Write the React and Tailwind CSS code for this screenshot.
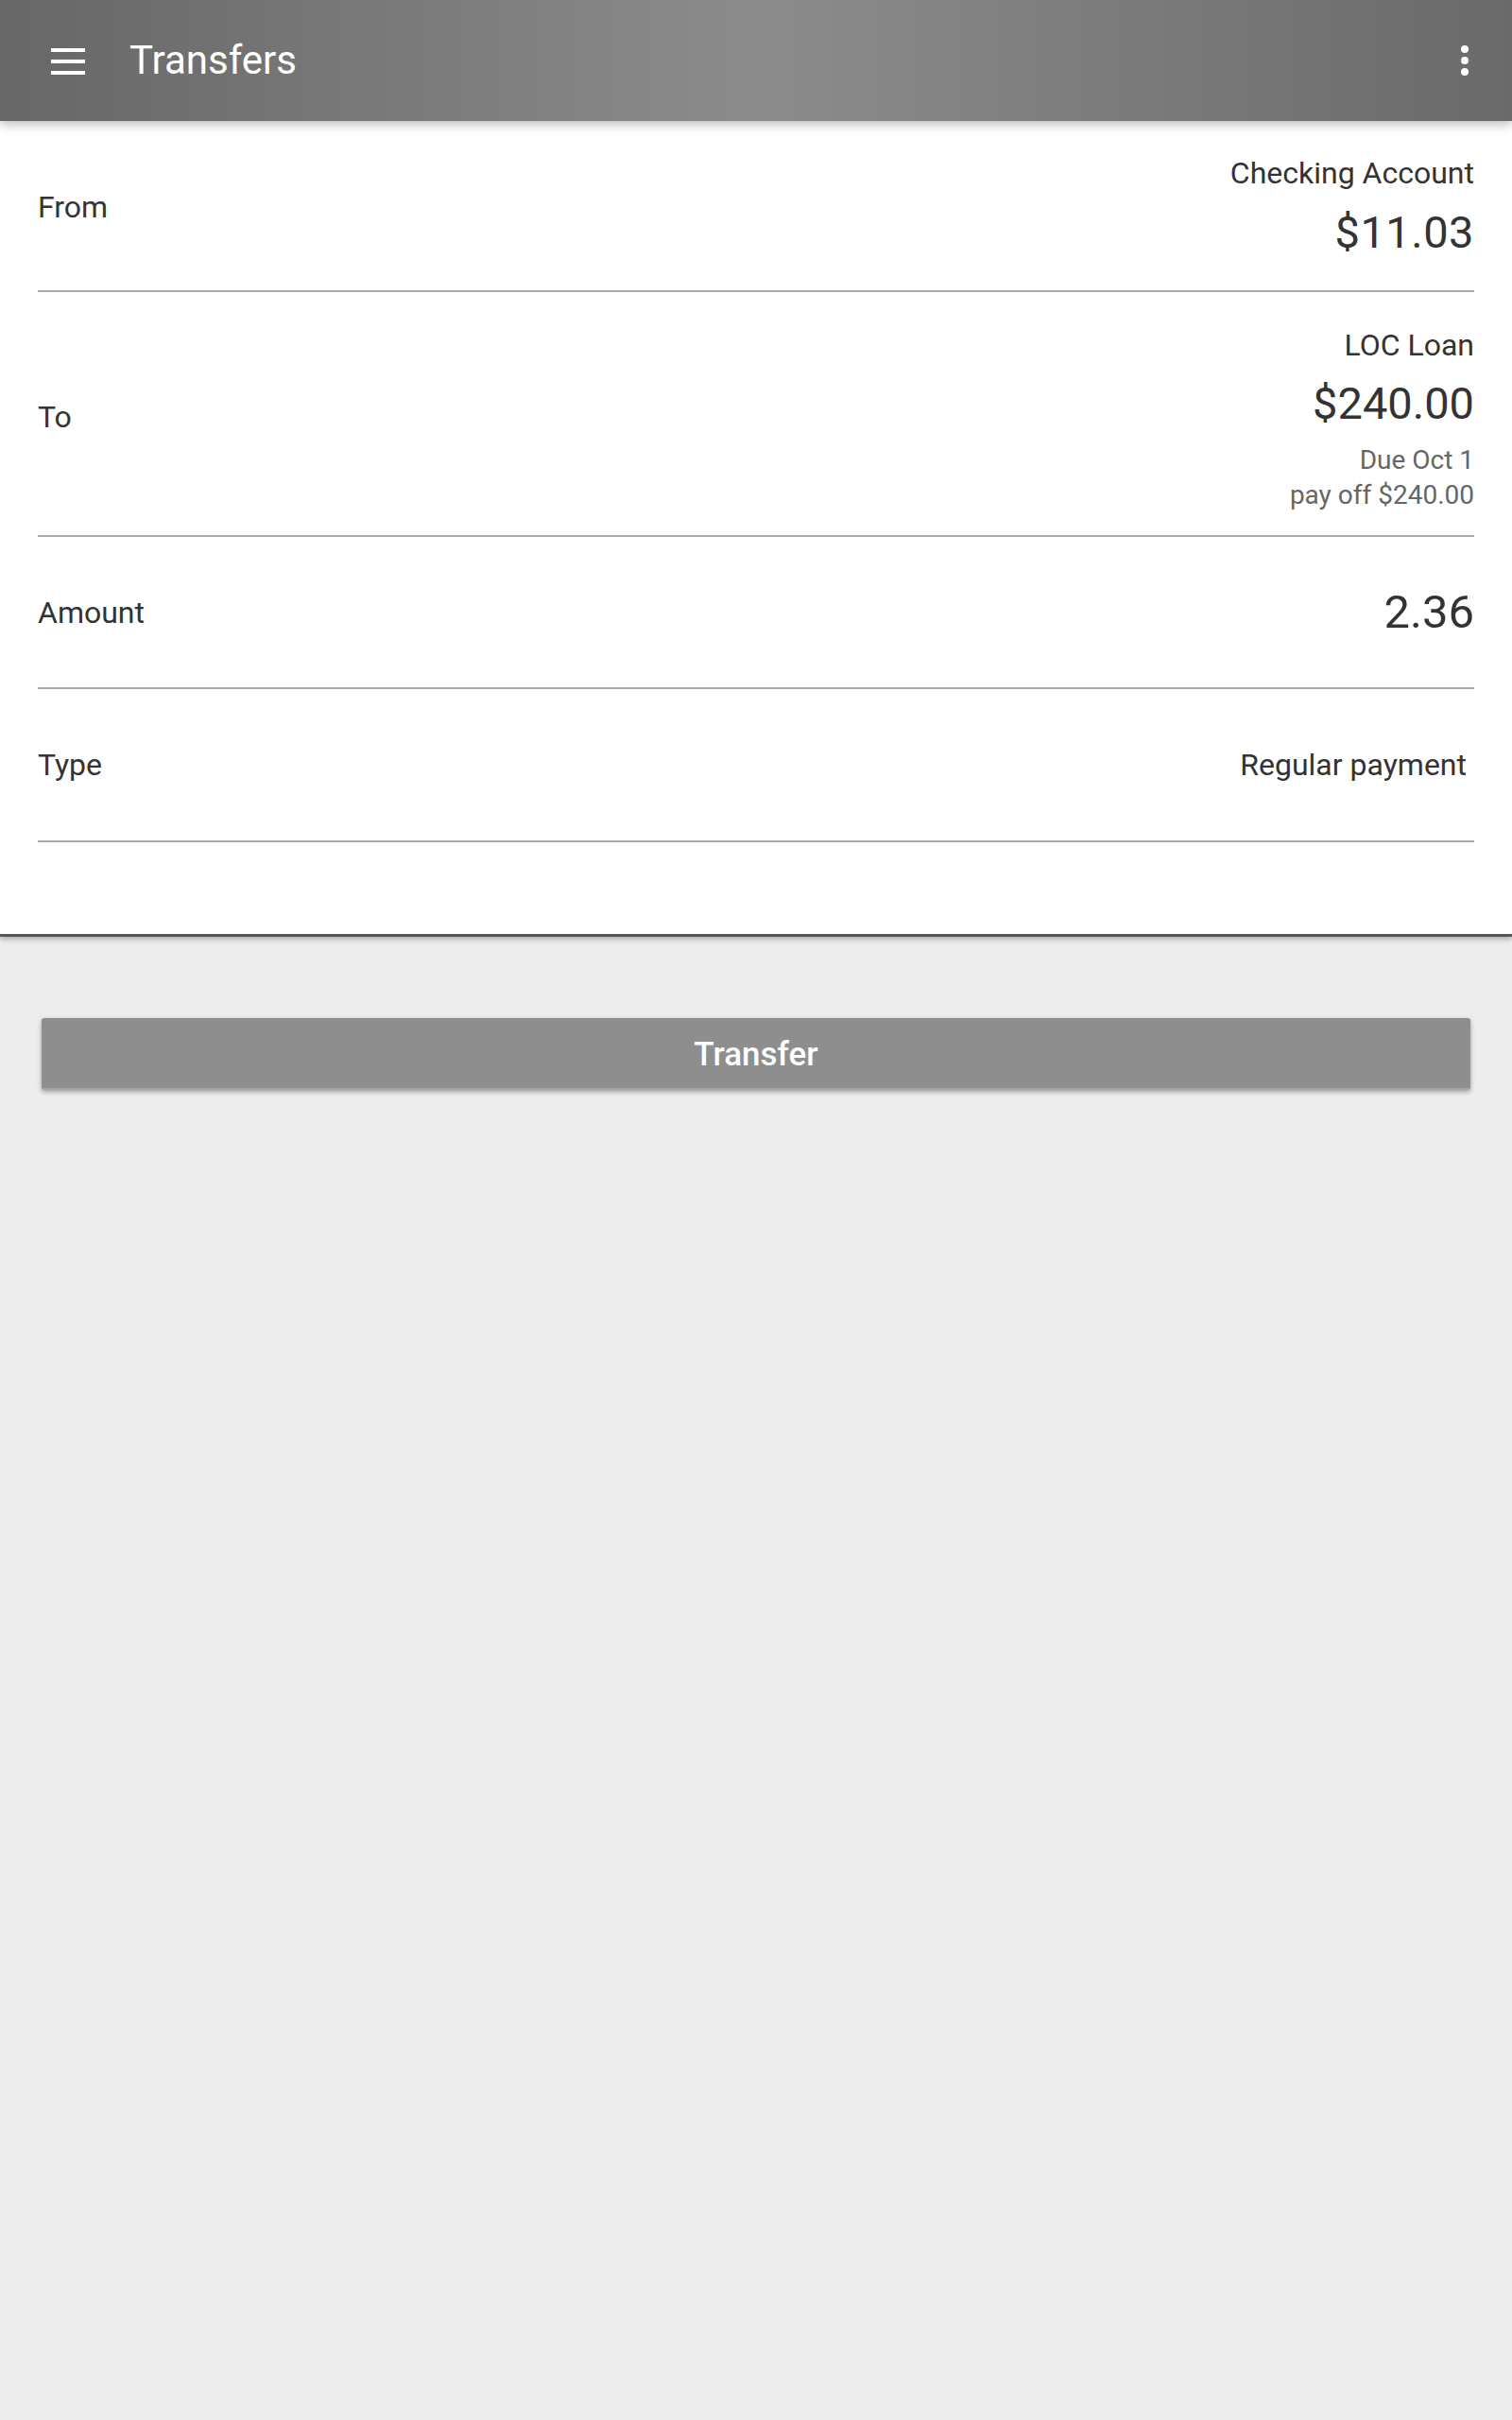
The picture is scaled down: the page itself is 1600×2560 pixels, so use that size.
import { useState } from 'react';

// Simple transfer form screen
function MenuIcon() {
  return (
    <svg width="36" height="28" viewBox="0 0 36 28" fill="white">
      <rect x="0" y="0" width="36" height="4" />
      <rect x="0" y="12" width="36" height="4" />
      <rect x="0" y="24" width="36" height="4" />
    </svg>
  );
}

function MoreIcon() {
  return (
    <svg width="8" height="32" viewBox="0 0 8 32" fill="white">
      <circle cx="4" cy="4" r="4" />
      <circle cx="4" cy="16" r="4" />
      <circle cx="4" cy="28" r="4" />
    </svg>
  );
}

export default function App() {
  const [amount] = useState('2.36');

  return (
    <div className="min-h-[2560px] bg-[#ededed] font-['Roboto','Liberation_Sans',sans-serif] text-[#333]">
      {/* Toolbar */}
      <header className="relative z-10 h-[128px] flex items-center bg-linear-to-r from-[#676767] via-[#8c8c8c] to-[#6a6a6a] shadow-[0_4px_10px_rgba(0,0,0,0.25)]">
        <div className="ml-[54px] mt-[1px] flex items-center">
          <MenuIcon />
        </div>
        <h1 className="ml-[47px] text-[42px] leading-none text-white">Transfers</h1>
        <div className="ml-auto mr-[46px] flex items-center">
          <MoreIcon />
        </div>
      </header>

      {/* Form */}
      <section className="bg-white px-[40px] pb-[97px] border-b-[3px] border-[#555] shadow-[0_3px_5px_rgba(0,0,0,0.25)]">
        <div className="flex items-center justify-between border-b-2 border-[#aaa] pt-[35px] pb-[33px]">
          <span className="text-[32px] leading-[40px]">From</span>
          <div className="flex flex-col items-end">
            <span className="text-[32px] leading-[40px]">Checking Account</span>
            <span className="mt-[15px] text-[47px] leading-[56px] tracking-[0.5px]">$11.03</span>
          </div>
        </div>

        <div className="flex items-center justify-between border-b-2 border-[#aaa] pt-[30px] pb-[24px]">
          <span className="text-[32px] leading-[40px]">To</span>
          <div className="flex flex-col items-end">
            <span className="mt-[6px] text-[32px] leading-[40px]">LOC Loan</span>
            <span className="mt-[14px] text-[47px] leading-[56px]">$240.00</span>
            <span className="mt-[13px] text-[28px] leading-[37px] text-[#666]">Due Oct 1</span>
            <span className="text-[28px] leading-[37px] text-[#666]">pay off $240.00</span>
          </div>
        </div>

        <div className="flex h-[161px] items-center justify-between border-b-2 border-[#aaa]">
          <span className="text-[32px] leading-[40px]">Amount</span>
          <span className="text-[49px] leading-[60px]">{amount}</span>
        </div>

        <div className="flex h-[162px] items-center justify-between border-b-2 border-[#aaa]">
          <span className="text-[32px] leading-[40px]">Type</span>
          <span className="pr-[8px] text-[32px] leading-[40px]">Regular payment</span>
        </div>
      </section>

      <div className="px-[44px] pt-[86px]">
        <button className="w-full h-[76px] rounded-[3px] bg-[#8e8e8e] border-b-2 border-[#a6a6a6] pt-[4px] text-[35px] font-medium text-white shadow-[0_2px_5px_rgba(0,0,0,0.35)]">
          Transfer
        </button>
      </div>
    </div>
  );
}
